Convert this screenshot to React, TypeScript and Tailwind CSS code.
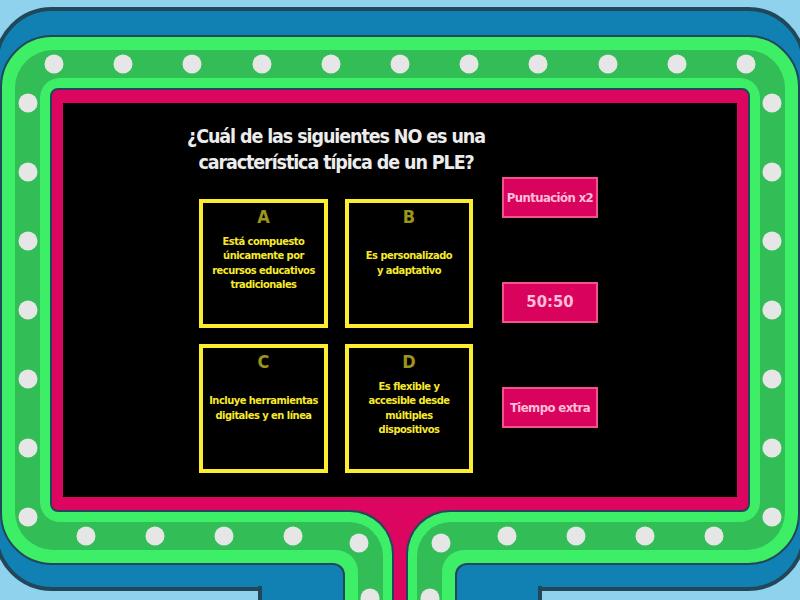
const FONT = { fontFamily: '"Liberation Sans Narrow", "DejaVu Sans Condensed", "Roboto Condensed", Roboto, sans-serif' };

const DOTS: [number, number][] = [
  ...Array.from({ length: 11 }, (_, k) => [54 + 69.2 * k, 64] as [number, number]),
  ...Array.from({ length: 7 }, (_, k) => [28, 103 + 69 * k] as [number, number]),
  ...Array.from({ length: 7 }, (_, k) => [772, 103 + 69 * k] as [number, number]),
  [86, 536], [155, 536], [224, 536], [293, 536], [359, 543],
  [441, 543], [507, 536], [576, 536], [645, 536], [714, 536],
  [370, 598], [430, 598],
];

const ANSWERS = [
  { letter: "A", lines: ["Está compuesto", "únicamente por", "recursos educativos", "tradicionales"] },
  { letter: "B", lines: ["Es personalizado", "y adaptativo"] },
  { letter: "C", lines: ["Incluye herramientas", "digitales y en línea"] },
  { letter: "D", lines: ["Es flexible y", "accesible desde", "múltiples", "dispositivos"] },
];

const POWERUPS = ["Puntuación x2", "50:50", "Tiempo extra"];

export default function App() {
  return (
    <div className="relative w-[800px] h-[600px] overflow-hidden bg-[#8fd2ee] pt-[7px]" style={FONT}>
      {/* blue outer frame */}
      <div className="mx-[-6px] h-[584px] rounded-[58px] border-4 border-[#23475a] bg-[#1181b3] px-[2px] pt-[24px]">
        {/* green frame */}
        <div className="h-[530px] rounded-[52px] border-2 border-[#23475a] bg-[#3def67] p-[13px]">
          <div className="h-full rounded-[38px] bg-[#33bd57] px-[25px] py-[28px]">
            <div className="h-full rounded-[20px] bg-[#3def67] p-[10px]">
              <div className="h-full rounded-[8px] border-2 border-[#23475a] bg-[#dc0661] px-[11px] py-[13px]">
                {/* screen */}
                <div className="h-full bg-black flex pl-[123px] pt-[21px]">
                  <div className="w-[300px] flex flex-col items-center">
                    <p className="whitespace-nowrap text-center text-[19.5px] leading-[26px] tracking-[-1.1px] font-bold text-[#ececec]">
                      ¿Cuál de las siguientes NO es una
                      <br />
                      característica típica de un PLE?
                    </p>
                    <div className="mt-[23px] grid grid-cols-[129px_128px] gap-x-[17px] gap-y-[16px]">
                      {ANSWERS.map((a) => (
                        <div key={a.letter} className="grid h-[129px] border-4 border-[#fcee2e]">
                          <span className="col-start-1 row-start-1 self-start justify-self-center mt-[3px] text-[18px] leading-[22px] font-bold text-[#9b951a]">
                            {a.letter}
                          </span>
                          <p className="col-start-1 row-start-1 self-center whitespace-nowrap text-center text-[11px] leading-[14.5px] tracking-[-0.5px] font-bold text-[#f7ea2b]">
                            {a.lines.map((l, i) => (
                              <span key={i} className="block">{l}</span>
                            ))}
                          </p>
                        </div>
                      ))}
                    </div>
                  </div>
                  <div className="ml-[16px] pt-[53px] flex flex-col gap-[64px]">
                    {POWERUPS.map((p) => (
                      <div
                        key={p}
                        className={`w-[96px] h-[41px] flex items-center justify-center whitespace-nowrap bg-[#d9035e] border-2 border-[#f2528f] font-bold text-[#ffbdd6] ${p === "50:50" ? "text-[16.5px]" : "text-[13px] tracking-[-0.6px]"}`}
                      >
                        {p}
                      </div>
                    ))}
                  </div>
                </div>
              </div>
            </div>
          </div>
        </div>
      </div>

      {/* blue frame running down beside the stand */}
      <div className="absolute left-[258px] top-[586px] w-[60px] h-[14px] bg-[#1181b3] border-l-4 border-[#23475a]" />
      <div className="absolute left-[482px] top-[586px] w-[60px] h-[14px] bg-[#1181b3] border-r-4 border-[#23475a]" />

      {/* stand: frame splits and turns down */}
      <div className="absolute left-[300px] top-[510px] w-[200px] h-[90px] flex justify-between bg-[#dc0661]">
        <div className="w-[94px] h-full rounded-tr-[44px] border-t-2 border-r-2 border-[#23475a] bg-[#3def67] pt-[10px] pr-[9px]">
          <div className="h-full rounded-tr-[34px] bg-[#33bd57] pt-[28px] pr-[25px]">
            <div className="h-full rounded-tr-[22px] bg-[#3def67] pt-[13px] pr-[13px]">
              <div className="h-full rounded-tr-[12px] border-t-2 border-r-2 border-[#23475a] bg-[#1181b3]" />
            </div>
          </div>
        </div>
        <div className="w-[94px] h-full rounded-tl-[44px] border-t-2 border-l-2 border-[#23475a] bg-[#3def67] pt-[10px] pl-[9px]">
          <div className="h-full rounded-tl-[34px] bg-[#33bd57] pt-[28px] pl-[25px]">
            <div className="h-full rounded-tl-[22px] bg-[#3def67] pt-[13px] pl-[13px]">
              <div className="h-full rounded-tl-[12px] border-t-2 border-l-2 border-[#23475a] bg-[#1181b3]" />
            </div>
          </div>
        </div>
      </div>

      {/* lights */}
      {DOTS.map(([x, y], i) => (
        <div
          key={i}
          className="absolute w-[19px] h-[19px] rounded-full bg-[#e6e6e6] -translate-x-1/2 -translate-y-1/2"
          style={{ left: x, top: y }}
        />
      ))}
    </div>
  );
}
